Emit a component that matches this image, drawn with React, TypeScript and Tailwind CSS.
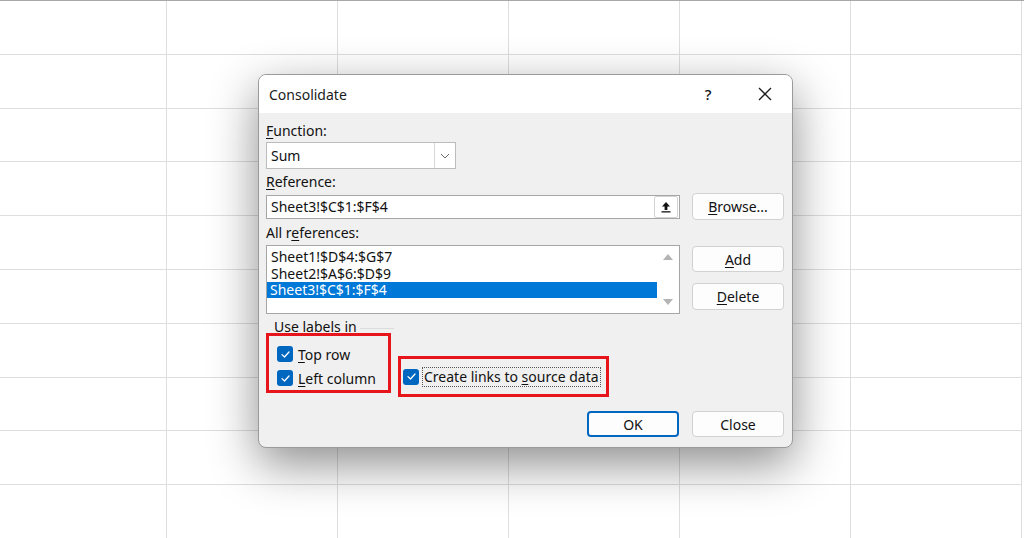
import React from "react";

const U = ({ c }: { c: string }) => (
  <span className="underline decoration-1 underline-offset-[2px]">{c}</span>
);

function Check() {
  return (
    <span className="w-4 h-4 shrink-0 rounded-[3px] bg-[#0067c0] flex items-center justify-center">
      <svg width="11" height="11" viewBox="0 0 11 11">
        <path d="M2 5.6 L4.5 8 L9 3" stroke="white" strokeWidth="1.3" fill="none" strokeLinecap="round" strokeLinejoin="round" />
      </svg>
    </span>
  );
}

function Btn({ children, className = "" }: { children: React.ReactNode; className?: string }) {
  return (
    <div className={`flex items-center justify-center bg-[#fdfdfd] border border-[#d1d1d1] rounded-[4px] text-[#111] ${className}`}>
      {children}
    </div>
  );
}

const colW = [167, 171, 171, 171, 171, 171];

export default function App() {
  return (
    <div className="relative w-[1024px] h-[538px] overflow-hidden bg-white font-['Noto_Sans',sans-serif] text-[14px] text-[#111]">
      {/* spreadsheet grid */}
      <div className="flex flex-col border-t border-[#a8a8a8]">
        {Array.from({ length: 11 }).map((_, r) => (
          <div key={r} className="flex h-[53.8px] shrink-0">
            {colW.map((w, c) => (
              <div key={c} style={{ width: w }} className="shrink-0 border-r border-b border-[#dedede]" />
            ))}
          </div>
        ))}
      </div>

      {/* dialog */}
      <div className="absolute left-[258px] top-[74px] w-[535px] h-[374px] rounded-[8px] border border-[#9a9a9a] bg-[#f0f0f0] shadow-[0_16px_48px_rgba(0,0,0,0.45)] overflow-hidden flex flex-col">
        <div className="h-[38px] bg-white flex items-center shrink-0">
          <div className="pl-[10px] flex-1 text-[14px] text-[#1b1b1b]">Consolidate</div>
          <div className="w-[46px] mr-[11px] text-center text-[15px] font-medium">?</div>
          <div className="w-[46px] flex justify-center mr-[4px]">
            <svg width="14" height="14" viewBox="0 0 14 14">
              <path d="M1 1 L13 13 M13 1 L1 13" stroke="#1b1b1b" strokeWidth="1.3" />
            </svg>
          </div>
        </div>

        <div className="flex-1 pl-[7px] pr-[8px] pt-[10px] flex flex-col">
          <div className="h-4 leading-4"><U c="F" />unction:</div>
          <div className="mt-[3px] w-[190px] h-[27px] bg-white border border-[#bcbcbc] flex">
            <div className="flex-1 pl-[4px] flex items-center">Sum</div>
            <div className="w-[21px] border-l border-[#d6d6d6] flex items-center justify-center">
              <svg width="10" height="6" viewBox="0 0 10 6">
                <path d="M1 1 L5 5 L9 1" stroke="#6a6a6a" strokeWidth="1" fill="none" />
              </svg>
            </div>
          </div>

          <div className="mt-[5px] h-4 leading-4"><U c="R" />eference:</div>
          <div className="mt-[3px] flex items-center gap-[12px]">
            <div className="w-[414px] h-[24px] bg-white border border-[#a6a6a6] flex items-center">
              <div className="flex-1 pl-[4px]">Sheet3!$C$1:$F$4</div>
              <div className="w-[24px] h-[22px] mr-[1px] bg-white border border-[#d4d4d4] rounded-[2px] flex items-center justify-center">
                <svg width="12" height="12" viewBox="0 0 12 12">
                  <path d="M6 1 L10 5.5 H7.4 V9 H4.6 V5.5 H2 Z" fill="#111" />
                  <rect x="1.5" y="10.2" width="9" height="1.3" fill="#111" />
                </svg>
              </div>
            </div>
            <Btn className="w-[92px] h-[27px]"><span><U c="B" />rowse...</span></Btn>
          </div>

          <div className="mt-[5px] h-4 leading-4">All r<U c="e" />ferences:</div>
          <div className="mt-[4px] flex gap-[12px]">
            <div className="w-[414px] h-[69px] bg-white border border-[#a6a6a6] flex">
              <div className="flex-1 pt-[2px] flex flex-col">
                <div className="h-[17px] leading-[17px] pl-[4px]">Sheet1!$D$4:$G$7</div>
                <div className="h-[17px] leading-[17px] pl-[4px]">Sheet2!$A$6:$D$9</div>
                <div className="h-[16px] leading-[16px] pl-[3px] bg-[#0078d7] text-white">Sheet3!$C$1:$F$4</div>
              </div>
              <div className="w-[22px] flex flex-col items-center justify-between py-[8px]">
                <svg width="10" height="6" viewBox="0 0 10 6"><path d="M5 0 L10 6 H0 Z" fill="#b4b4b4" /></svg>
                <svg width="10" height="6" viewBox="0 0 10 6"><path d="M0 0 H10 L5 6 Z" fill="#b4b4b4" /></svg>
              </div>
            </div>
            <div className="flex flex-col pt-[1px] gap-[11px]">
              <Btn className="w-[92px] h-[26px]"><span><U c="A" />dd</span></Btn>
              <Btn className="w-[92px] h-[27px]"><span><U c="D" />elete</span></Btn>
            </div>
          </div>

          <div className="mt-[6px] h-[13px] leading-[16px] flex items-center">
            <span className="pl-[8px] pr-[3px] bg-[#f0f0f0]">Use labels in</span>
            <div className="w-[34px] h-px bg-[#dcdcdc] mt-[4px]" />
          </div>
          <div className="flex items-start">
            <div className="w-[125px] h-[60px] border-[3px] border-[#e8141c] pl-[8px] pt-[10px] flex flex-col gap-[8px]">
              <div className="flex items-center gap-[5px] h-4"><Check /><span><U c="T" />op row</span></div>
              <div className="flex items-center gap-[5px] h-4"><Check /><span><U c="L" />eft column</span></div>
            </div>
            <div className="ml-[7px] mt-[23px] w-[211px] h-[41px] border-[3px] border-[#e8141c] pl-[2px] flex items-center">
              <Check />
              <span className="ml-[3px] h-[20px] leading-[18px] px-[1px] border border-dotted border-[#555] whitespace-nowrap">
                Create links to <U c="s" />ource data
              </span>
            </div>
          </div>

          <div className="mt-[14px] flex justify-end gap-[13px]">
            <Btn className="w-[92px] h-[26px] !border-[#0067c0] !border-2">OK</Btn>
            <Btn className="w-[92px] h-[26px]">Close</Btn>
          </div>
        </div>
      </div>
    </div>
  );
}
